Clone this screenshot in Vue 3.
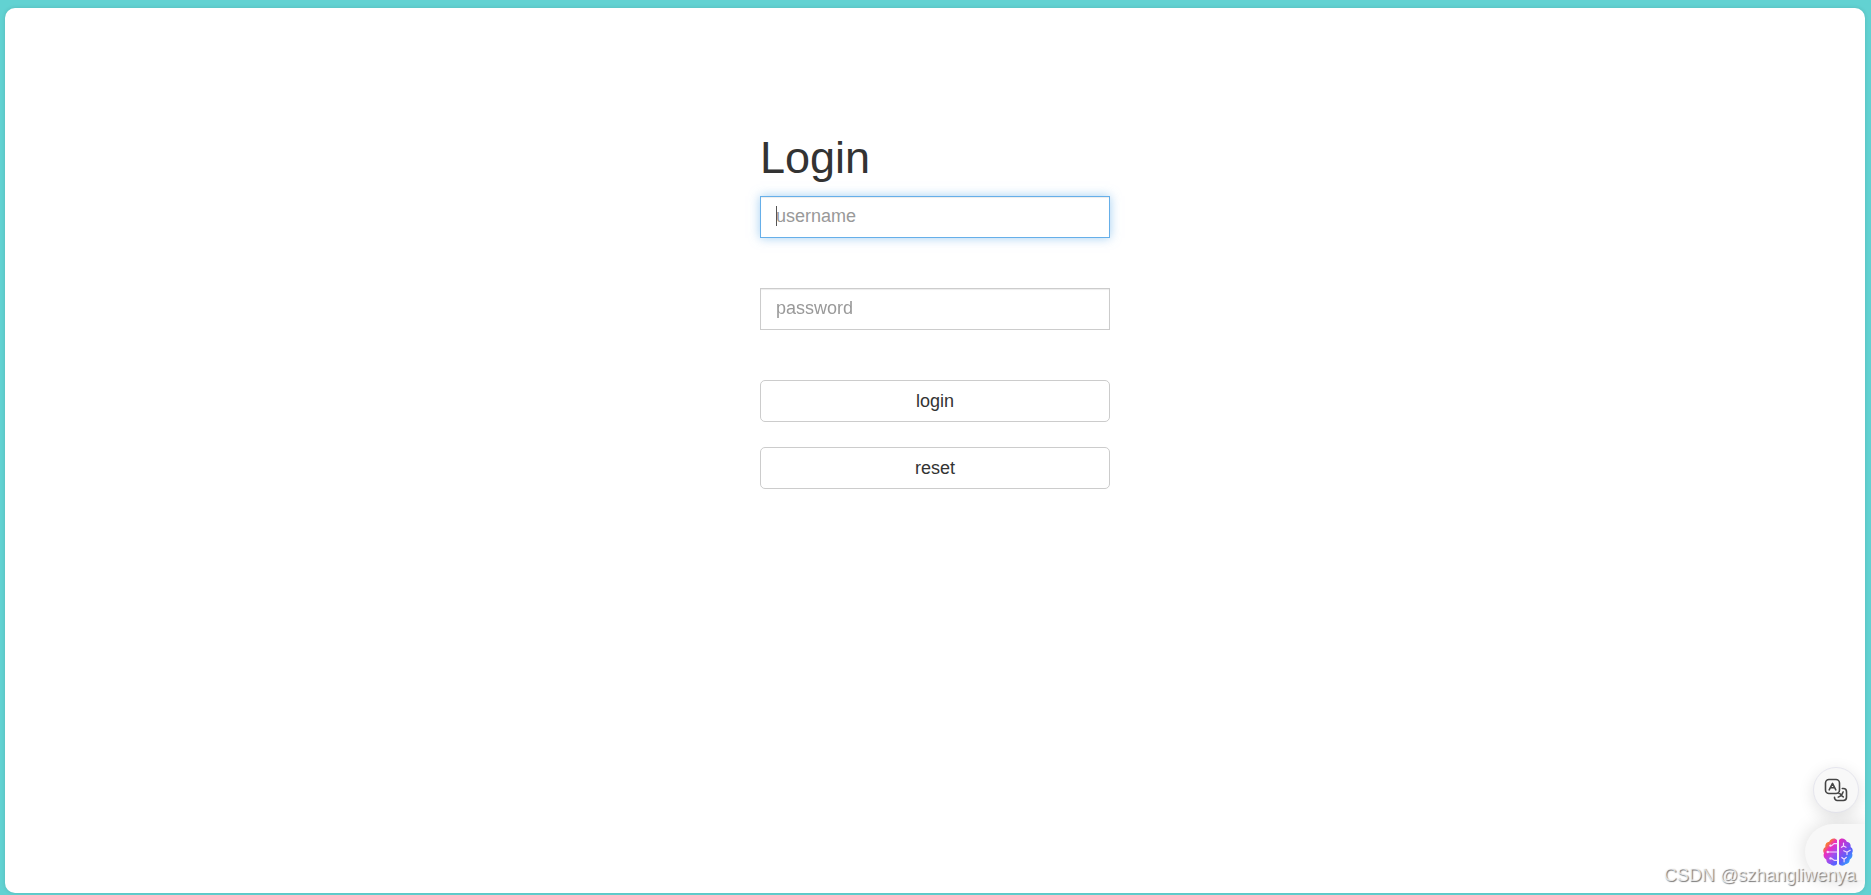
<script setup>
import { ref, onMounted } from 'vue'

const username = ref('')
const password = ref('')
const usernameInput = ref(null)

function reset() {
  username.value = ''
  password.value = ''
  usernameInput.value.focus()
}

onMounted(() => usernameInput.value.focus())
</script>

<template>
  <div class="frame">
    <main class="page">
      <form class="login" @submit.prevent>
        <h1>Login</h1>
        <div class="row" :class="{ empty: !username }">
          <input ref="usernameInput" v-model="username" class="field" type="text" placeholder="username" aria-label="username" autocomplete="off" />
        </div>
        <div class="row">
          <input v-model="password" class="field" type="password" placeholder="password" aria-label="password" />
        </div>
        <div class="actions">
          <button class="btn" type="submit">login</button>
          <button class="btn" type="button" @click="reset">reset</button>
        </div>
      </form>

      <div class="tools">
        <button class="translate" type="button" aria-label="Translate">
          <svg width="24" height="24" viewBox="0 0 24 24" fill="none" stroke="#444" stroke-width="1.6" stroke-linecap="round" stroke-linejoin="round">
            <rect x="1.500" y="1.500" width="14" height="14" rx="3.500" />
            <path d="M5.200 11.800 8.500 5.400l3.300 6.400M6.400 9.800h4.200" />
            <path d="M18.300 10.500h1a3.200 3.200 0 0 1 3.200 3.200v5.600a3.200 3.200 0 0 1-3.200 3.200h-6a3 3 0 0 1-2.800-3.200" />
            <path d="M19.200 13.800c-.8 2.800-2.400 4.500-5 5.400M14.800 15.600h1.200c.8 1.600 1.900 2.700 3.400 3.400" stroke-width="1.400" />
          </svg>
        </button>
        <button class="assistant" type="button" aria-label="Assistant">
          <svg width="30" height="28" viewBox="0 0 30 28">
            <defs>
              <linearGradient id="brainLeft" x1="0.1" y1="0" x2="0.7" y2="1">
                <stop offset="0" stop-color="#ffb21c" />
                <stop offset="0.24" stop-color="#f8763a" />
                <stop offset="0.44" stop-color="#ec2cc0" />
                <stop offset="0.7" stop-color="#a94bea" />
                <stop offset="1" stop-color="#5a62ff" />
              </linearGradient>
              <linearGradient id="brainRight" x1="0" y1="0" x2="0.6" y2="1">
                <stop offset="0" stop-color="#ed27b5" />
                <stop offset="0.4" stop-color="#a044e8" />
                <stop offset="0.7" stop-color="#5961fa" />
                <stop offset="1" stop-color="#33a6ff" />
              </linearGradient>
            </defs>
            <path fill="url(#brainLeft)" d="M14 2v24c-1.300 2-4.700 2.300-6.300.2-2.500.1-4.700-2-4.300-4.500C1.200 20.500-.2 17.500 1 15.200-.5 13.100.2 10 2.400 8.900 1.900 6.400 3.500 4 6.200 3.800 7.100.2 12.300-.8 14 2z" />
            <path fill="url(#brainRight)" d="M16 2v24c1.300 2 4.700 2.300 6.300.2 2.500.1 4.700-2 4.300-4.500 2.200-1.200 3.600-4.200 2.400-6.500 1.500-2.100.8-5.200-1.400-6.300.5-2.500-1.100-4.900-3.800-5.100C22.900.2 17.700-.8 16 2z" />
            <g fill="none" stroke="#f5d8ff" stroke-width="1.200" stroke-linecap="round" stroke-linejoin="round">
              <path d="M14 5.600h-2.500c-1.600 0-1.700 2-3.600 2M14 14H5M14 22.400h-2.500c-1.600 0-1.700-2-3.600-2" />
              <path d="M20.500 5v3M18.400 9.300l2.100-1.300 2.500 1.200M20.700 12.800l3.300 1.400 3.200-2M24 14.200v2.400M18.800 19.500l2.300 1.800 2.300-2M21.100 21.300v2.500" />
            </g>
            <g fill="#f5d8ff">
              <circle cx="7.500" cy="7.600" r="1.200" />
              <circle cx="4.700" cy="14" r="1.200" />
              <circle cx="7.500" cy="20.400" r="1.200" />
            </g>
          </svg>
        </button>
      </div>
    </main>
    <p class="watermark">CSDN @szhangliwenya</p>
  </div>
</template>

<style>
body {
  margin: 0;
  background: #62d2d2;
}
</style>

<style scoped>
.frame {
  position: relative;
  box-sizing: border-box;
  display: flex;
  min-height: 100vh;
  padding: 8px 6px 2px 5px;
  background: #62d2d2;
  font-family: "Liberation Sans", Arial, sans-serif;
}
.page {
  position: relative;
  flex: 1;
  overflow: hidden;
  border-radius: 10px;
  background: #fff;
  box-shadow: 0 0 4px rgba(0, 0, 0, 0.12);
}
.login {
  display: flex;
  flex-direction: column;
  width: 350px;
  margin: 125px auto 0;
}
h1 {
  margin: 0 0 13px;
  color: #333;
  font-size: 45px;
  font-weight: 400;
  line-height: 50px;
}
.row {
  position: relative;
  display: flex;
  margin-bottom: 50px;
}
/* text cursor shown while the focused field is empty */
.row.empty:focus-within::after {
  content: "";
  position: absolute;
  top: 10px;
  left: 16px;
  width: 1px;
  height: 20px;
  background: #555;
}
.row.empty .field {
  caret-color: transparent;
}
.field {
  box-sizing: border-box;
  width: 100%;
  height: 42px;
  padding: 6px 15px 7px;
  border: 1px solid #ccc;
  border-radius: 0;
  outline: none;
  background: #fff;
  box-shadow: inset 0 1px 1px rgba(0, 0, 0, 0.075);
  color: #555;
  font-family: inherit;
  font-size: 18px;
}
.field::placeholder {
  color: #999;
  opacity: 1;
}
.field:focus {
  border-color: #66afe9;
  box-shadow: inset 0 1px 1px rgba(0, 0, 0, 0.075), 0 0 10px rgba(102, 175, 233, 0.6);
}
.actions {
  display: flex;
  flex-direction: column;
  gap: 25px;
}
.btn {
  height: 42px;
  padding: 0 15px;
  border: 1px solid #ccc;
  border-radius: 5px;
  background: #fff;
  color: #333;
  font-family: inherit;
  font-size: 18px;
  cursor: pointer;
}
.tools {
  position: absolute;
  right: 0;
  bottom: 13px;
  display: flex;
  flex-direction: column;
  align-items: flex-end;
  gap: 11px;
}
.tools button {
  display: flex;
  align-items: center;
  justify-content: center;
  padding: 0;
  background: #f8f8f8;
  cursor: pointer;
}
.translate {
  width: 46px;
  height: 46px;
  margin-right: 6px;
  border: 1px solid #e6e6ee;
  border-radius: 50%;
  box-shadow: 0 4px 16px rgba(0, 0, 0, 0.12);
}
.assistant {
  width: 60px;
  height: 56px;
  border: 0;
  border-radius: 28px 0 0 28px;
  box-shadow: 0 0 20px rgba(0, 0, 0, 0.15);
}
.assistant svg {
  margin-left: 6px;
}
.watermark {
  position: absolute;
  right: 15px;
  bottom: 9px;
  margin: 0;
  color: rgba(255, 255, 255, 0.7);
  font-size: 18px;
  line-height: 22px;
  text-shadow: 1px 1px 1px #777;
}
</style>
